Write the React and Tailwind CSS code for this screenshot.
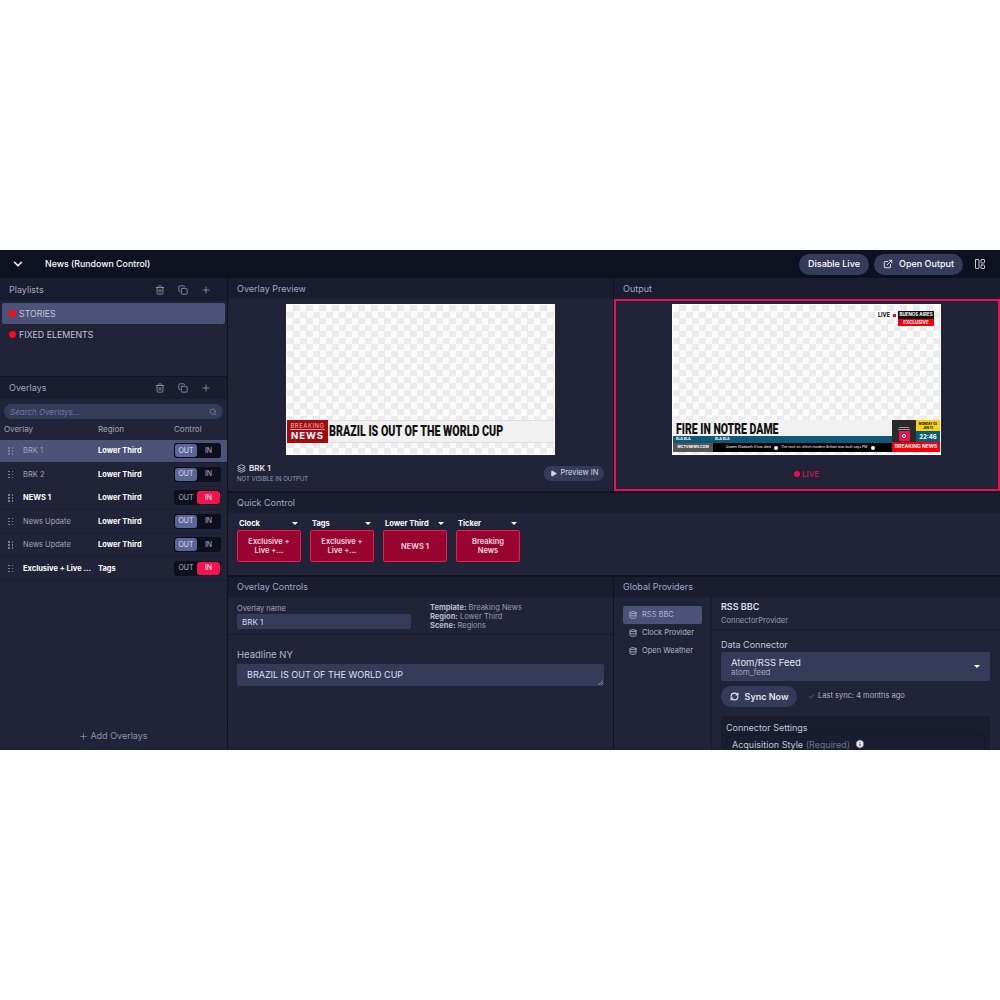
import { Check, ChevronDown, Copy, Database, ExternalLink, Info, Layers, LayoutPanelLeft, Play, Plus, RefreshCw, Search, Trash2 } from "lucide-react";

const overlays = [
    { name: "BRK 1", region: "Lower Third", live: false, active: true },
    { name: "BRK 2", region: "Lower Third", live: false },
    { name: "NEWS 1", region: "Lower Third", live: true },
    { name: "News Update", region: "Lower Third", live: false },
    { name: "News Update", region: "Lower Third", live: false },
    { name: "Exclusive + Live ...", region: "Tags", live: true },
];

const quickControls = [
    { label: "Clock", text: "Exclusive + Live +..." },
    { label: "Tags", text: "Exclusive + Live +..." },
    { label: "Lower Third", text: "NEWS 1" },
    { label: "Ticker", text: "Breaking News" },
];

const checker = "relative flex w-[269px] h-[151px] flex-col justify-end overflow-hidden border border-white bg-white bg-[repeating-conic-gradient(#ebebeb_0_25%,#fbfbfb_0_50%)] bg-[length:13px_13px]";

const Caret = () => <span className="h-0 w-0 border-x-[3px] border-t-[3px] border-x-transparent border-t-white" />;

const PanelHeader = ({ title, children, className = "h-[21px] pt-[1px]" }) => (
    <div className={`flex shrink-0 items-center justify-between bg-[#1a1d30] pl-[9px] pr-[10px] ${className}`}>
        <span className="text-[9px] text-[#a3a7c4]">{title}</span>
        {children}
    </div>
);

const ListActions = () => (
    <div className="flex items-center gap-[13px] pr-[6px] text-[#9296b0]">
        <Trash2 size={10} />
        <Copy size={10} />
        <Plus size={10} />
    </div>
);

const Dots = () => (
    <div className="grid grid-cols-2 gap-x-[2px] gap-y-[1.5px]">
        {[0, 1, 2, 3, 4, 5].map((i) => <span key={i} className="h-[1.5px] w-[1.5px] bg-[#7d8098]" />)}
    </div>
);

const OverlayRow = ({ item }) => (
    <div className={`flex h-[23.5px] shrink-0 items-center border-b border-[#1b1e31] pl-[8px] text-[7.5px] ${item.active ? "bg-[#4c5278]" : ""}`}>
        <Dots />
        <span className={`ml-[10px] w-[75px] whitespace-nowrap ${item.live ? "font-bold text-white" : "text-[#a3a6b8]"}`}>{item.name}</span>
        <span className="w-[76px] font-bold text-white">{item.region}</span>
        <div className="flex h-[15px] w-[47px] rounded-[3px] bg-[#0d0f1c] p-[1px] text-[7px]">
            <span className={`flex w-[22px] items-center justify-center rounded-[3px] ${item.live ? "text-[#b6b8c6]" : "bg-[#5c6597] text-[#dfe1ee]"}`}>OUT</span>
            <span className={`flex w-[23px] items-center justify-center rounded-[3px] ${item.live ? "bg-[#f5134f] text-white" : "text-[#b6b8c6]"}`}>IN</span>
        </div>
    </div>
);

const LeftColumn = () => (
    <div className="flex w-[228px] shrink-0 flex-col border-r border-[#10121f]">
        <div className="flex h-[99px] shrink-0 flex-col border-b border-[#10121f]">
            <PanelHeader title="Playlists" className="h-[23px]"><ListActions /></PanelHeader>
            <div className="px-[2px] pt-[2px] text-[8.8px] text-[#c4c6d4]">
                <div className="flex h-[21px] items-center gap-[3px] rounded-[2px] bg-[#4c5278] pl-[7px]">
                    <span className="h-[7px] w-[7px] rounded-full bg-[#ff0a16]" />STORIES
                </div>
                <div className="flex h-[21px] items-center gap-[3px] pl-[7px]">
                    <span className="h-[7px] w-[7px] rounded-full bg-[#ff0a16]" />FIXED ELEMENTS
                </div>
            </div>
        </div>
        <PanelHeader title="Overlays" className="h-[22px]"><ListActions /></PanelHeader>
        <div className="px-[4px] pt-[5px]">
            <div className="flex h-[15px] items-center justify-between rounded-full bg-[#363b5a] pl-[6px] pr-[6px]">
                <span className="text-[8px] italic text-[#6f76a8]">Search Overlays...</span>
                <Search size={8} className="text-[#8c90ad]" />
            </div>
        </div>
        <div className="flex h-[20.5px] shrink-0 items-center pl-[4px] text-[8px] text-[#a3a6b8]">
            <span className="w-[94px]">Overlay</span>
            <span className="w-[76px]">Region</span>
            <span>Control</span>
        </div>
        {overlays.map((item, i) => <OverlayRow key={i} item={item} />)}
        <div className="mt-auto flex h-[29px] shrink-0 items-center justify-center gap-[2px] border-t border-[#1b1e31] text-[9px] text-[#8f93ac]">
            <Plus size={9} />Add Overlays
        </div>
    </div>
);

const BreakingNews = () => (
    <div className={checker}>
        <div className="mb-[11px] flex h-[23px] items-center border-y border-[#dddddd] bg-[#f1f1f1]">
            <div className="flex h-[23px] w-[41px] shrink-0 flex-col items-center justify-center bg-[#a30a0f] leading-none text-white">
                <span className="border-b border-[#d99] text-[6px] tracking-[0.5px] text-[#eebbbb]">BREAKING</span>
                <span className="mt-[1px] text-[9.5px] font-bold tracking-[1px]">NEWS</span>
            </div>
            <span className="ml-[1px] mt-[1px] origin-left scale-x-[0.69] whitespace-nowrap font-['Roboto',sans-serif] text-[15.5px] font-black text-[#111]">BRAZIL IS OUT OF THE WORLD CUP</span>
        </div>
    </div>
);

const OutputGraphic = () => (
    <div className={checker}>
        <div className="absolute right-[6px] top-[6px] flex items-start">
            <span className="mr-[2px] mt-[1px] bg-white px-[1px] text-[5.5px] font-bold leading-[7px] text-black">LIVE</span>
            <span className="mr-[2px] mt-[3px] h-[3px] w-[3px] bg-[#f00]" />
            <div className="w-[36px] whitespace-nowrap border-b border-white text-center text-[4.5px] font-bold text-white">
                <div className="bg-[#111] leading-[8px]">BUENOS AIRES</div>
                <div className="bg-[#f50008] leading-[7px]">EXCLUSIVE</div>
            </div>
        </div>
        <div className="mb-[2px] flex h-[32px]">
            <div className="flex flex-1 flex-col">
                <div className="flex h-[16px] items-center bg-[#f1f1f1] pl-[3px]">
                    <span className="mt-[2px] origin-left scale-x-[0.7] whitespace-nowrap font-['Roboto',sans-serif] text-[15px] font-black leading-none text-[#111]">FIRE IN NOTRE DAME</span>
                </div>
                <div className="flex h-[7px] items-center bg-[#0d5a78] pl-[3px] text-[3.5px] font-bold text-white">
                    <span className="w-[39px]">BLA BLA</span><span>BLA BLA</span>
                </div>
                <div className="flex h-[9px] items-center bg-black text-[3.5px] text-white">
                    <span className="mr-[13px] flex h-[9px] w-[40px] items-center justify-center bg-[#555] font-bold">WCTVNEWS.COM</span>
                    <span className="whitespace-nowrap">Queen Elizabeth II has died</span>
                    <span className="mx-[3px] h-[4px] w-[4px] rounded-full bg-white" />
                    <span className="whitespace-nowrap">The rock on which modern Britain was built says PM</span>
                    <span className="ml-[3px] h-[4px] w-[4px] rounded-full bg-white" />
                </div>
            </div>
            <div className="flex w-[48px] shrink-0 flex-col">
                <div className="flex h-[22px]">
                    <div className="flex w-[24px] flex-col items-center justify-end bg-[#2b2b2b] pb-[1px]">
                        <span className="mb-[1px] h-[1px] w-[10px] bg-[#999]" />
                        <span className="mb-[1px] h-[1px] w-[12px] bg-[#999]" />
                        <span className="flex h-[10px] w-[11px] items-center justify-center bg-[#e8134f]">
                            <span className="h-[4px] w-[4px] rounded-full border border-white" />
                        </span>
                    </div>
                    <div className="flex w-[24px] flex-col">
                        <div className="flex h-[11px] items-center justify-center bg-[#f9d30b] text-center text-[3px] font-bold leading-[4px] text-black">MONDAY 02<br />JAN 12</div>
                        <div className="flex flex-1 items-center justify-center bg-[#0d5a78] text-[6px] font-bold text-white">22:46</div>
                    </div>
                </div>
                <div className="flex h-[10px] items-center justify-center bg-[#f50008] text-[5px] font-bold text-white">BREAKING NEWS</div>
            </div>
        </div>
    </div>
);

const PreviewPanel = () => (
    <div className="flex h-[215px] shrink-0 flex-col border-b-2 border-[#10121f]">
        <PanelHeader title="Overlay Preview" />
        <div className="flex justify-center pt-[5px]"><BreakingNews /></div>
        <div className="flex items-center justify-between pl-[9px] pr-[9px] pt-[8px]">
            <div>
                <div className="flex items-center gap-[3px] text-[8px] font-semibold leading-[11px] text-[#e4e5ee]">
                    <Layers size={9} />BRK 1
                </div>
                <div className="text-[6px] leading-[9px] text-[#9a9db4]">NOT VISIBLE IN OUTPUT</div>
            </div>
            <div className="flex h-[15px] w-[60px] items-center justify-center gap-[4px] rounded-full bg-[#363b5a] text-[7.5px] text-[#d7d9e6]">
                <Play size={7} fill="currentColor" />Preview IN
            </div>
        </div>
    </div>
);

const QuickControl = () => (
    <div className="flex h-[84px] shrink-0 flex-col border-b-2 border-[#10121f]">
        <PanelHeader title="Quick Control" className="h-[20px]" />
        <div className="flex gap-[9px] pl-[9px] pt-[5px]">
            {quickControls.map((item) => (
                <div key={item.label} className="w-[64px]">
                    <div className="flex h-[11px] items-center justify-between pl-[2px] pr-[3px] text-[7.5px] font-bold text-white">
                        {item.label}<Caret />
                    </div>
                    <div className="mt-[1px] flex h-[32px] items-center justify-center rounded-[2px] border border-[#f01a50] bg-[#98042f] px-[8px] text-center text-[7.5px] font-semibold leading-[9px] text-[#f7dbe3]">
                        {item.text}
                    </div>
                </div>
            ))}
        </div>
    </div>
);

const OverlayControls = () => (
    <div className="flex flex-1 flex-col">
        <PanelHeader title="Overlay Controls" className="h-[20px]" />
        <div className="flex h-[38px] shrink-0 border-b border-[#171a2b] pl-[9px] pt-[6px]">
            <div className="w-[193px]">
                <div className="text-[7.5px] leading-[11px] text-[#a3a6b8]">Overlay name</div>
                <div className="flex h-[15px] w-[174px] items-center rounded-[2px] bg-[#363b5a] pl-[5px] text-[8px] text-[#d7d9e6]">BRK 1</div>
            </div>
            <div className="text-[7.5px] leading-[9px] text-[#9a9db4]">
                <div><b className="text-[#b9bccb]">Template:</b> Breaking News</div>
                <div><b className="text-[#b9bccb]">Region:</b> Lower Third</div>
                <div><b className="text-[#b9bccb]">Scene:</b> Regions</div>
            </div>
        </div>
        <div className="px-[9px] pt-[13px]">
            <div className="text-[9.5px] leading-[13px] text-[#b3b6c8]">Headline NY</div>
            <div className="relative mt-[3px] flex h-[22px] items-center rounded-[2px] bg-[#363b5a] pl-[10px] text-[9px] text-[#dfe1ee]">
                BRAZIL IS OUT OF THE WORLD CUP
                <svg width="5" height="5" viewBox="0 0 5 5" className="absolute bottom-[1px] right-[1px] text-[#b3b6c8]">
                    <path d="M0.5 5 L5 0.5 M3 5 L5 3" stroke="currentColor" strokeWidth="0.7" />
                </svg>
            </div>
        </div>
    </div>
);

const GlobalProviders = () => (
    <div className="flex min-h-0 flex-1 flex-col">
        <PanelHeader title="Global Providers" className="h-[20px]" />
        <div className="flex flex-1">
            <div className="w-[98px] shrink-0 border-r border-[#171a2b] pl-[9px] pr-[9px] pt-[9px] text-[7.5px] text-[#b3b6c8]">
                <div className="flex h-[18px] items-center gap-[5px] rounded-[2px] bg-[#4c5278] pl-[6px]"><Database size={8} strokeWidth={2.5} />RSS BBC</div>
                <div className="flex h-[18px] items-center gap-[5px] pl-[6px]"><Database size={8} strokeWidth={2.5} />Clock Provider</div>
                <div className="flex h-[18px] items-center gap-[5px] pl-[6px]"><Database size={8} strokeWidth={2.5} />Open Weather</div>
            </div>
            <div className="flex-1">
                <div className="h-[33px] border-b border-[#171a2b] pl-[9px] pt-[3px]">
                    <div className="text-[9px] font-semibold leading-[14px] text-[#dfe1ee]">RSS BBC</div>
                    <div className="text-[7.5px] leading-[14px] text-[#9a9db4]">ConnectorProvider</div>
                </div>
                <div className="pl-[9px] pr-[10px] pt-[9px]">
                    <div className="text-[9px] leading-[12px] text-[#c4c6d4]">Data Connector</div>
                    <div className="mt-[1px] flex h-[29px] items-center justify-between rounded-[2px] bg-[#363b5a] pl-[10px] pr-[10px]">
                        <div>
                            <div className="text-[9.5px] leading-[11px] text-[#e4e5ee]">Atom/RSS Feed</div>
                            <div className="text-[8px] leading-[8px] text-[#a3a6b8]">atom_feed</div>
                        </div>
                        <Caret />
                    </div>
                    <div className="mt-[5px] flex items-center gap-[11px]">
                        <div className="flex h-[21px] w-[76px] items-center justify-center gap-[6px] rounded-full bg-[#363b5a] text-[9px] font-semibold text-[#e4e5ee]">
                            <RefreshCw size={9} strokeWidth={3} />Sync Now
                        </div>
                        <div className="mb-[1px] flex items-center gap-[3px] text-[7.5px] text-[#b3b6c8]">
                            <Check size={7} className="text-[#2fc7a0]" />Last sync: 4 months ago
                        </div>
                    </div>
                    <div className="mt-[9px] rounded-t-[3px] bg-[#1a1d30] px-[5px] pt-[5px]">
                        <div className="text-[9px] leading-[13px] text-[#c4c6d4]">Connector Settings</div>
                        <div className="flex h-[20px] items-start gap-[5px] rounded-t-[3px] border border-b-0 border-[#14162a] pl-[5px] pt-[3px] text-[9px] leading-[13px] text-[#c4c6d4]">
                            <span>Acquisition Style <span className="text-[#70748e]">(Required)</span></span>
                            <Info size={10} fill="#e4e5ee" className="mt-[1px] text-[#1a1d30]" />
                        </div>
                    </div>
                </div>
            </div>
        </div>
    </div>
);

const App = () => {
    return (
        <div className="min-h-[1000px] bg-white pt-[250px] font-['Inter',sans-serif]">
            <div className="flex h-[500px] flex-col overflow-hidden bg-[#212439]">
                {/* Top bar */}
                <div className="flex h-[28px] shrink-0 items-center bg-[#0e1120] pl-[11px] pr-[14px] text-white">
                    <ChevronDown size={14} strokeWidth={2.5} />
                    <span className="ml-[20px] text-[8.8px] font-medium">News (Rundown Control)</span>
                    <div className="ml-auto flex h-[21px] w-[70px] items-center justify-center rounded-full bg-[#363b5a] text-[9px] font-medium">Disable Live</div>
                    <div className="ml-[5px] flex h-[21px] w-[89px] items-center justify-center gap-[6px] rounded-full bg-[#363b5a] text-[9px] font-medium">
                        <ExternalLink size={10} />Open Output
                    </div>
                    <LayoutPanelLeft size={12} className="ml-[11px] text-[#c4c6d4]" />
                </div>

                <div className="flex min-h-0 flex-1">
                    <LeftColumn />
                    <div className="flex min-w-0 flex-1 flex-col">
                        {/* Previews */}
                        <div className="flex shrink-0">
                            <div className="w-[386px] shrink-0 border-r border-[#10121f]">
                                <PreviewPanel />
                            </div>
                            <div className="flex h-[215px] flex-1 flex-col border-b-2 border-[#10121f]">
                                <PanelHeader title="Output" />
                                <div className="flex h-[192px] flex-col items-center border-2 border-[#e8134f] pr-[1px] pt-[3px]">
                                    <OutputGraphic />
                                    <div className="mt-[13px] flex items-center gap-[2px] text-[8px] text-[#e8134f]">
                                        <span className="h-[6px] w-[6px] rounded-full bg-[#e8134f]" />LIVE
                                    </div>
                                </div>
                            </div>
                        </div>
                        <QuickControl />
                        <div className="flex min-h-0 flex-1">
                            <div className="flex w-[386px] shrink-0 border-r border-[#10121f]">
                                <OverlayControls />
                            </div>
                            <GlobalProviders />
                        </div>
                    </div>
                </div>
            </div>
        </div>
    );
};

export default App;
